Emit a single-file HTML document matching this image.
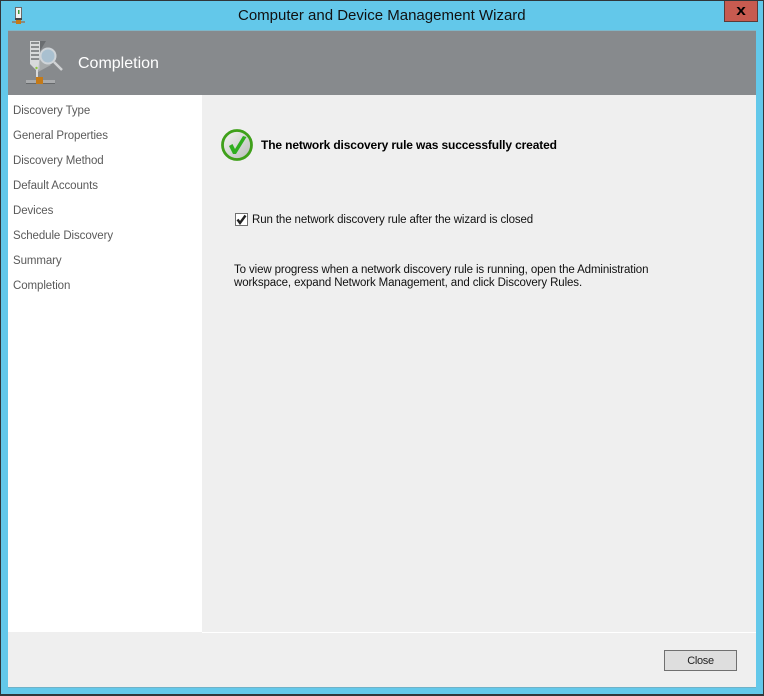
<!DOCTYPE html>
<html><head><meta charset="utf-8"><style>
html,body{margin:0;padding:0;width:764px;height:696px;overflow:hidden;background:#63c8ea;font-family:"Liberation Sans",sans-serif}
div{position:absolute;white-space:nowrap}
svg{position:absolute}
.n{left:13px;font-size:11.5px;letter-spacing:-.09px;color:#5a5a5a;line-height:14px}
.t{font-size:11.5px;letter-spacing:-.115px;color:#111;line-height:14px}
</style></head><body>
<div style="left:0;top:0;width:764px;height:696px;box-sizing:border-box;border:1px solid #30363a;border-width:1px 1px 2px 1px;background:#63c8ea"></div>
<div style="left:238px;top:7px;font-size:15px;line-height:18px;color:#111">Computer and Device Management Wizard</div>
<svg style="left:12px;top:6px" width="16" height="18" viewBox="0 0 16 18"><rect x="3.5" y="1.500" width="6" height="11" fill="#f2f2f2" stroke="#6b6b6b"/><rect x="6" y="4" width="1.500" height="4" fill="#3a9a3a"/><rect x="3" y="12" width="7" height="2" fill="#444"/><rect x="0" y="15" width="13" height="2" fill="#8a8a80"/><rect x="4" y="14" width="5" height="4" fill="#c47a18"/></svg>
<div style="left:724px;top:1px;width:34px;height:21px;box-sizing:border-box;background:#c75b50;border:1px solid #5b3a38;border-top:0"></div>
<div style="left:733px;top:2px;width:16px;height:18px;font-size:15px;line-height:18px;font-weight:bold;color:#000;text-align:center;transform:scaleX(1.150)">x</div>
<div style="left:8px;top:30px;width:748px;height:1px;background:#7fb6c8"></div>
<div style="left:8px;top:31px;width:748px;height:64px;background:#878a8d"></div>
<svg style="left:24px;top:39px" width="40" height="48" viewBox="0 0 40 48">
<path d="M6 2H16V30L14 31V38H12V31L6 25Z" fill="#d8dadb"/>
<path d="M7 4H15M7 8H15M7 12H15M7 16H15M7 20H15" stroke="#6f7274" stroke-width="1.500"/>
<path d="M16 2H22L16 12Z" fill="#6a6d70"/>
<path d="M16 14L27 26L14 33Z" fill="#aeb1b3" opacity=".8"/>
<circle cx="12.500" cy="29" r="1.200" fill="#8cc63f"/>
<circle cx="24" cy="17" r="7.500" fill="#a9c0d0" stroke="#cfd4d8" stroke-width="2"/>
<path d="M30 23L38 31" stroke="#d0d2d4" stroke-width="2.500"/>
<rect x="2" y="41" width="29" height="3" fill="#a9abad"/>
<rect x="2" y="44" width="29" height="1" fill="#66696b"/>
<rect x="12" y="38" width="7" height="7" fill="#c47a18"/>
</svg>
<div style="left:78px;top:53px;font-size:16px;line-height:21px;color:#fff">Completion</div>
<div style="left:8px;top:95px;width:748px;height:592px;background:#efefef"></div>
<div style="left:8px;top:95px;width:194px;height:537px;background:#fff"></div>
<div style="left:202px;top:632px;width:554px;height:1px;background:#fff"></div>
<div style="left:8px;top:687px;width:748px;height:1px;background:#6fb2c8"></div>
<div class="n" style="top:104px">Discovery Type</div>
<div class="n" style="top:129px">General Properties</div>
<div class="n" style="top:154px">Discovery Method</div>
<div class="n" style="top:179px">Default Accounts</div>
<div class="n" style="top:204px">Devices</div>
<div class="n" style="top:229px">Schedule Discovery</div>
<div class="n" style="top:254px">Summary</div>
<div class="n" style="top:279px">Completion</div>
<svg style="left:220px;top:128px" width="34" height="34" viewBox="0 0 34 34"><defs><linearGradient id="g" x1="0" y1="0" x2="1" y2="1"><stop offset="0" stop-color="#f4f6f4"/><stop offset="1" stop-color="#b9bcb9"/></linearGradient></defs><circle cx="17" cy="17" r="14.500" fill="url(#g)" stroke="#3fa01a" stroke-width="2.800"/><path d="M9 18L12.500 16L15 21L23 8L26.500 9L16 26L13 26Z" fill="#2fae1f"/></svg>
<div class="t" style="left:261px;top:138px;font-size:12px;letter-spacing:-.137px;font-weight:bold;color:#000">The network discovery rule was successfully created</div>
<div style="left:235px;top:213px;width:13px;height:13px;box-sizing:border-box;border:1px solid #707070;background:#fff"></div>
<svg style="left:235px;top:213px" width="13" height="13" viewBox="0 0 13 13"><path d="M2.500 6.500L5 10L10.500 2.500" fill="none" stroke="#222" stroke-width="2.400"/></svg>
<div class="t" style="left:252px;top:213px">Run the network discovery rule after the wizard is closed</div>
<div class="t" style="left:234px;top:263px">To view progress when a network discovery rule is running, open the Administration</div>
<div class="t" style="left:234px;top:276px">workspace, expand Network Management, and click Discovery Rules.</div>
<div style="left:664px;top:650px;width:73px;height:21px;box-sizing:border-box;border:1px solid #707070;background:#dedede;text-align:center;font-size:11px;letter-spacing:-.3px;line-height:20px;color:#222">Close</div>
</body></html>
